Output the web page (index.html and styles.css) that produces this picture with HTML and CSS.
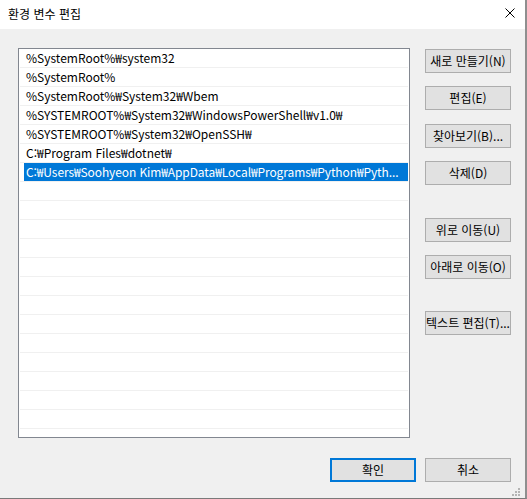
FILE: index.html
```html
<!DOCTYPE html>
<html lang="ko">
<head>
<meta charset="utf-8">
<title>환경 변수 편집</title>
<link rel="stylesheet" href="styles.css">
</head>
<body>
<div class="window">
  <div class="titlebar">
    <span class="title">환경 변수 편집</span>
    <span class="close">
      <svg width="10" height="10" viewBox="0 0 10 10"><path d="M0.5 0.5 L9.5 9.5 M9.5 0.5 L0.5 9.5" stroke="#000" stroke-width="1" fill="none"/></svg>
    </span>
  </div>
  <div class="content">
    <div class="main">
      <div class="list">
        <div class="row"><span class="item">%SystemRoot%₩system32</span></div>
        <div class="row"><span class="item">%SystemRoot%</span></div>
        <div class="row"><span class="item">%SystemRoot%₩System32₩Wbem</span></div>
        <div class="row"><span class="item">%SYSTEMROOT%₩System32₩WindowsPowerShell₩v1.0₩</span></div>
        <div class="row"><span class="item">%SYSTEMROOT%₩System32₩OpenSSH₩</span></div>
        <div class="row"><span class="item">C:₩Program Files₩dotnet₩</span></div>
        <div class="row"><span class="item selected">C:₩Users₩Soohyeon Kim₩AppData₩Local₩Programs₩Python₩Pyth...</span></div>
        <div class="row"><span class="item"></span></div>
        <div class="row"><span class="item"></span></div>
        <div class="row"><span class="item"></span></div>
        <div class="row"><span class="item"></span></div>
        <div class="row"><span class="item"></span></div>
        <div class="row"><span class="item"></span></div>
        <div class="row"><span class="item"></span></div>
        <div class="row"><span class="item"></span></div>
        <div class="row"><span class="item"></span></div>
        <div class="row"><span class="item"></span></div>
        <div class="row"><span class="item"></span></div>
        <div class="row"><span class="item"></span></div>
        <div class="row"><span class="item"></span></div>
        <div class="row"><span class="item"></span></div>
      </div>
      <div class="side">
        <button class="btn b-new">새로 만들기(N)</button>
        <button class="btn b-edit">편집(E)</button>
        <button class="btn b-browse">찾아보기(B)...</button>
        <button class="btn b-del">삭제(D)</button>
        <button class="btn b-up">위로 이동(U)</button>
        <button class="btn b-down">아래로 이동(O)</button>
        <button class="btn b-text">텍스트 편집(T)...</button>
      </div>
    </div>
    <div class="footer">
      <button class="btn default">확인</button>
      <button class="btn">취소</button>
    </div>
    <svg class="grip" width="9" height="9" viewBox="0 0 9 9">
      <rect x="6" y="0" width="2" height="2" fill="#b4b4b4"/>
      <rect x="3" y="3" width="2" height="2" fill="#b4b4b4"/>
      <rect x="6" y="3" width="2" height="2" fill="#b4b4b4"/>
      <rect x="0" y="6" width="2" height="2" fill="#b4b4b4"/>
      <rect x="3" y="6" width="2" height="2" fill="#b4b4b4"/>
      <rect x="6" y="6" width="2" height="2" fill="#b4b4b4"/>
    </svg>
  </div>
</div>
</body>
</html>
```

FILE: styles.css
```css
* { box-sizing: border-box; }
html, body { margin: 0; padding: 0; background: #f0f0f0; }
body {
  font-family: "Noto Sans CJK KR", "Noto Sans", sans-serif;
  font-size: 12px;
  color: #000;
}
.window {
  width: 527px;
  height: 499px;
  border-right: 2px solid #8f8f8f;
  border-bottom: 1px solid #7a7a7a;
  display: flex;
  flex-direction: column;
  background: #f0f0f0;
}
.titlebar {
  height: 29px;
  background: #fff;
  display: flex;
  align-items: center;
  justify-content: space-between;
  padding: 0 10px 0 8px;
  flex: none;
}
.title { font-size: 12px; line-height: 16px; margin-top: -1px; }
.close { display: flex; width: 10px; height: 10px; margin-top: -3px; }
.content {
  position: relative;
  flex: 1;
  display: flex;
  flex-direction: column;
}
.main {
  display: flex;
  padding: 19px 0 0 18px;
}
.list {
  width: 392px;
  height: 390px;
  border: 1px solid #828790;
  background: #fff;
  overflow: hidden;
  flex: none;
}
.row {
  margin: 0 1px;
  height: 19px;
  border-bottom: 1px solid #f0f0f0;
  display: flex;
}
.item {
  flex: 1;
  min-width: 0;
  margin-left: 4px;
  padding-left: 2px;
  line-height: 18px;
  height: 18px;
  white-space: nowrap;
  overflow: hidden;
}
.item.selected { background: #0078d7; color: #fff; letter-spacing: -0.1px; }
.side {
  display: flex;
  flex-direction: column;
  margin-left: 15px;
  padding-top: 1px;
}
.btn {
  font-family: inherit;
  font-size: 12px;
  color: #000;
  width: 86px;
  height: 24px;
  padding: 0;
  background: #e1e1e1;
  border: 1px solid #adadad;
  white-space: nowrap;
  line-height: 20px;
}
.b-edit { margin-top: 13px; }
.b-browse { margin-top: 14px; }
.b-del { margin-top: 13px; }
.b-up { margin-top: 33px; }
.b-down { margin-top: 13px; }
.b-text { margin-top: 32px; }
.footer {
  display: flex;
  justify-content: flex-end;
  gap: 9px;
  padding: 20px 14px 0 0;
}
.btn.default { border: 2px solid #0078d7; }
.grip { position: absolute; right: 4px; bottom: 1px; }
```
